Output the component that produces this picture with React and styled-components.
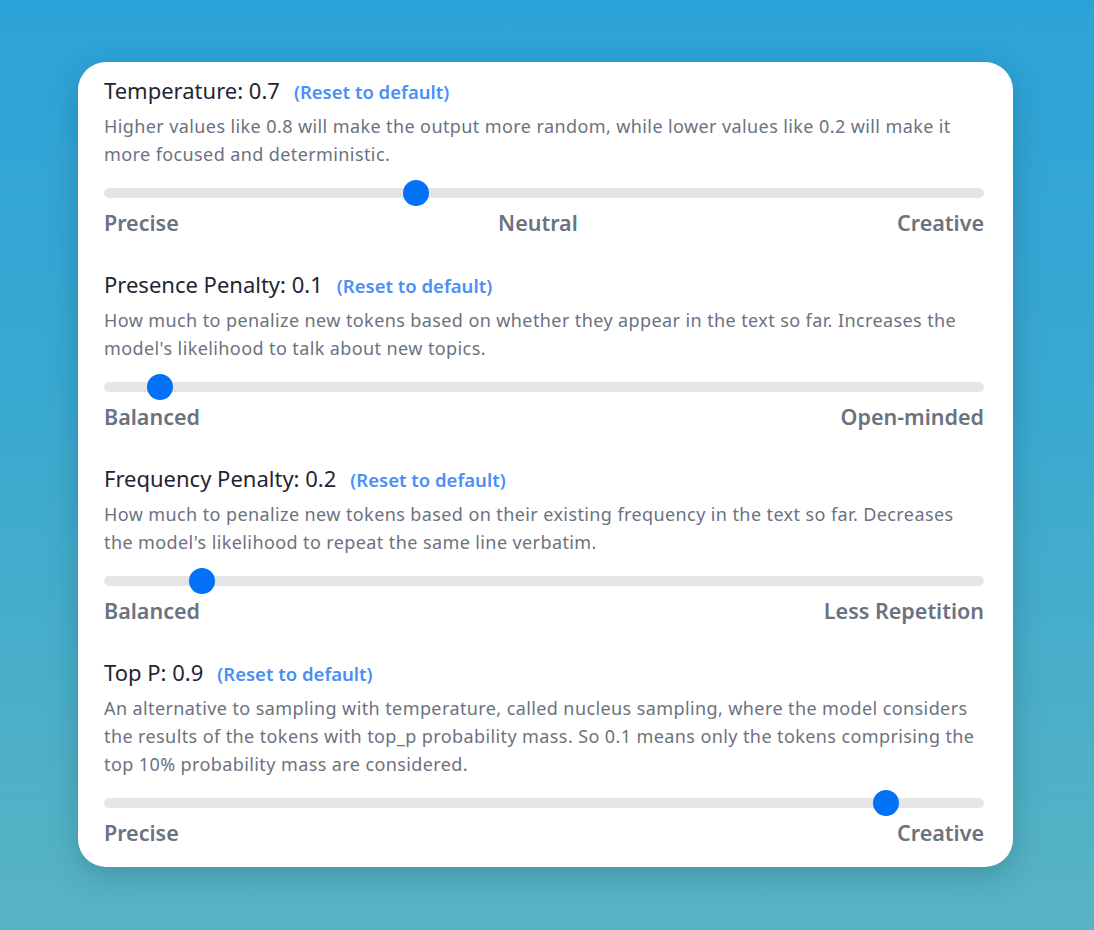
import React from "react";
import styled, { createGlobalStyle } from "styled-components";

const Global = createGlobalStyle`
  html, body { margin: 0; padding: 0; }
  body {
    font-family: "Noto Sans", "Open Sans", sans-serif;
    background: linear-gradient(180deg, #2ca3d8 0%, #3aa9d0 45%, #58b4c3 100%);
    min-height: 930px;
  }
`;

const Page = styled.div`
  width: 1094px;
  height: 930px;
  padding: 62px 0 0 78px;
  box-sizing: border-box;
`;

const Card = styled.div`
  width: 935px;
  height: 805px;
  box-sizing: border-box;
  background: #fff;
  border-radius: 28px;
  padding: 14px 29px 0 26px;
  box-shadow: 0 8px 30px rgba(20, 60, 80, 0.28);
  display: flex;
  flex-direction: column;
  gap: 33px;
`;

const Section = styled.div`
  display: flex;
  flex-direction: column;
`;

const TitleRow = styled.div`
  display: flex;
  align-items: baseline;
  gap: 14px;
  height: 28px;
  line-height: 28px;
`;

const Title = styled.span`
  font-size: 22px;
  color: #1f2533;
`;

const Reset = styled.button`
  border: none;
  background: none;
  padding: 0;
  font-family: inherit;
  font-size: 18.5px;
  font-weight: 600;
  color: #4a8ff5;
  cursor: pointer;
`;

const Desc = styled.p`
  margin: 8px 0 0;
  font-size: 18px;
  letter-spacing: 0.4px;
  line-height: 28px;
  color: #6b7280;
`;

const Range = styled.input`
  -webkit-appearance: none;
  appearance: none;
  width: 100%;
  height: 26px;
  margin: 12px 0 0;
  background: transparent;
  display: block;
  &::-webkit-slider-runnable-track {
    height: 10px;
    background: #e5e5e5;
    border-radius: 5px;
  }
  &::-webkit-slider-thumb {
    -webkit-appearance: none;
    width: 26px;
    height: 26px;
    border-radius: 50%;
    background: #0472f6;
    margin-top: -8px;
    border: none;
  }
  &:focus { outline: none; }
`;

const Labels = styled.div`
  display: flex;
  justify-content: space-between;
  margin-top: 3px;
  font-size: 21.5px;
  line-height: 28px;
  font-weight: 600;
  color: #6b7280;
`;

const items = [
  {
    name: "Temperature",
    value: 0.7,
    min: 0,
    max: 2,
    desc: "Higher values like 0.8 will make the output more random, while lower values like 0.2 will make it more focused and deterministic.",
    labels: ["Precise", "Neutral", "Creative"],
  },
  {
    name: "Presence Penalty",
    value: 0.1,
    min: 0,
    max: 2,
    desc: "How much to penalize new tokens based on whether they appear in the text so far. Increases the model's likelihood to talk about new topics.",
    labels: ["Balanced", "Open-minded"],
  },
  {
    name: "Frequency Penalty",
    value: 0.2,
    min: 0,
    max: 2,
    desc: "How much to penalize new tokens based on their existing frequency in the text so far. Decreases the model's likelihood to repeat the same line verbatim.",
    labels: ["Balanced", "Less Repetition"],
  },
  {
    name: "Top P",
    value: 0.9,
    min: 0,
    max: 1,
    desc: "An alternative to sampling with temperature, called nucleus sampling, where the model considers the results of the tokens with top_p probability mass. So 0.1 means only the tokens comprising the top 10% probability mass are considered.",
    labels: ["Precise", "Creative"],
  },
];

function Setting({ item }) {
  const [v, setV] = React.useState(item.value);
  return (
    <Section>
      <TitleRow>
        <Title>
          {item.name}: {v}
        </Title>
        <Reset onClick={() => setV(item.value)}>(Reset to default)</Reset>
      </TitleRow>
      <Desc>{item.desc}</Desc>
      <Range
        type="range"
        min={item.min}
        max={item.max}
        step={0.1}
        value={v}
        onChange={(e) => setV(parseFloat(e.target.value))}
      />
      <Labels>
        {item.labels.map((l) => (
          <span key={l}>{l}</span>
        ))}
      </Labels>
    </Section>
  );
}

export default function App() {
  return (
    <>
      <Global />
      <Page>
        <Card>
          {items.map((it) => (
            <Setting key={it.name} item={it} />
          ))}
        </Card>
      </Page>
    </>
  );
}
